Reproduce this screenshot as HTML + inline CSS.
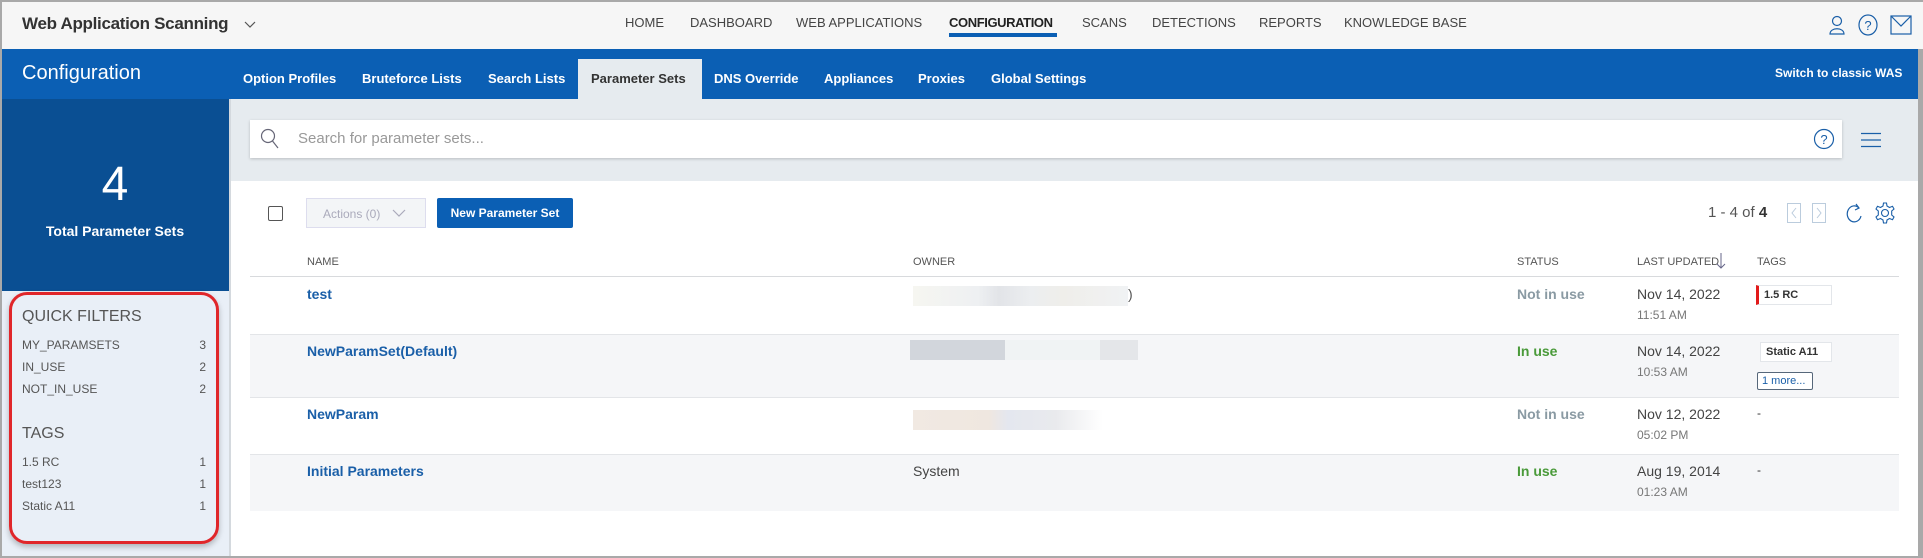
<!DOCTYPE html>
<html><head><meta charset="utf-8"><style>
*{margin:0;padding:0;box-sizing:border-box}
body{width:1923px;height:558px;overflow:hidden;background:#fff;font-family:"Liberation Sans",sans-serif;position:relative;color:#333}
.a{position:absolute;white-space:nowrap}
.nav{font-size:13px;color:#444;top:15px}
.tab{font-size:13px;font-weight:bold;color:#fff;top:71px}
.qf{font-size:12px;color:#555;left:22px}
.cnt{font-size:12px;color:#555;left:196px;width:10px;text-align:right}
.hd{font-size:11px;color:#555;top:256px}
.nm{font-size:14px;font-weight:bold;color:#1a5fa8;left:307px}
.st{font-size:14px;font-weight:bold;left:1517px}
.dt{font-size:14px;color:#444;left:1637px}
.tm{font-size:12px;color:#777;left:1637px}
.blur{position:absolute;height:20px}
</style></head><body>
<div class="a" style="left:0;top:0;width:1923px;height:2px;background:#a9a9a9"></div>
<div class="a" style="left:0;top:2px;width:1923px;height:47px;background:#f6f6f6"></div>
<div class="a" style="left:22px;top:14px;font-size:17px;font-weight:bold;color:#333;letter-spacing:-0.3px">Web Application Scanning</div>
<svg class="a" style="left:244px;top:20px" width="12" height="10"><path d="M1 2 L6 7 L11 2" fill="none" stroke="#555" stroke-width="1.2"/></svg>
<div class="a nav" style="left:625px">HOME</div>
<div class="a nav" style="left:690px">DASHBOARD</div>
<div class="a nav" style="left:796px">WEB APPLICATIONS</div>
<div class="a nav" style="left:949px;font-weight:bold;color:#222;letter-spacing:-0.4px">CONFIGURATION</div>
<div class="a" style="left:949px;top:33px;width:108px;height:4px;background:#0b5fb4"></div>
<div class="a nav" style="left:1082px">SCANS</div>
<div class="a nav" style="left:1152px">DETECTIONS</div>
<div class="a nav" style="left:1259px">REPORTS</div>
<div class="a nav" style="left:1344px">KNOWLEDGE BASE</div>
<svg class="a" style="left:1829px;top:15px" width="16" height="20"><circle cx="8" cy="6" r="4.5" fill="none" stroke="#1a5fa8" stroke-width="1.2"/><path d="M1 19 C1 12 15 12 15 19 Z" fill="none" stroke="#1a5fa8" stroke-width="1.2"/></svg>
<svg class="a" style="left:1858px;top:14px" width="20" height="22"><ellipse cx="10" cy="11" rx="9" ry="10" fill="none" stroke="#1a5fa8" stroke-width="1.2"/><text x="10" y="16" font-size="13" text-anchor="middle" fill="#1a5fa8" font-family="Liberation Sans">?</text></svg>
<svg class="a" style="left:1890px;top:15px" width="22" height="20"><rect x="1" y="1" width="20" height="18" fill="none" stroke="#1a5fa8" stroke-width="1.2"/><path d="M1 1 L11 11 L21 1" fill="none" stroke="#1a5fa8" stroke-width="1.2"/></svg>

<div class="a" style="left:0;top:49px;width:1918px;height:50px;background:#0b5fb4"></div>
<div class="a" style="left:22px;top:62px;font-size:20px;color:#fff">Configuration</div>
<div class="a" style="left:578px;top:59px;width:124px;height:40px;background:#e6ebef"></div>
<div class="a tab" style="left:243px">Option Profiles</div>
<div class="a tab" style="left:362px">Bruteforce Lists</div>
<div class="a tab" style="left:488px">Search Lists</div>
<div class="a tab" style="left:591px;color:#333">Parameter Sets</div>
<div class="a tab" style="left:714px">DNS Override</div>
<div class="a tab" style="left:824px">Appliances</div>
<div class="a tab" style="left:918px">Proxies</div>
<div class="a tab" style="left:991px">Global Settings</div>
<div class="a" style="left:1775px;top:66px;font-size:12px;font-weight:bold;color:#fff">Switch to classic WAS</div>

<div class="a" style="left:0;top:99px;width:230px;height:192px;background:#0a4f93"></div>
<div class="a" style="left:0;top:291px;width:230px;height:265px;background:#e9eff7"></div>
<div class="a" style="left:229px;top:99px;width:2px;height:457px;background:#d4d9de"></div>
<div class="a" style="left:0;top:157px;width:230px;text-align:center;font-size:48px;color:#fff">4</div>
<div class="a" style="left:0;top:223px;width:230px;text-align:center;font-size:14px;font-weight:bold;color:#fff">Total Parameter Sets</div>
<div class="a" style="left:9px;top:292px;width:210px;height:252px;border:3px solid #e0262a;border-radius:18px;box-shadow:0 3px 6px rgba(0,0,0,.25)"></div>
<div class="a" style="left:22px;top:308px;font-size:16px;color:#555;font-family:'Liberation Sans Narrow','Liberation Sans',sans-serif">QUICK FILTERS</div>
<div class="a qf" style="top:338px">MY_PARAMSETS</div><div class="a cnt" style="top:338px">3</div>
<div class="a qf" style="top:360px">IN_USE</div><div class="a cnt" style="top:360px">2</div>
<div class="a qf" style="top:382px">NOT_IN_USE</div><div class="a cnt" style="top:382px">2</div>
<div class="a" style="left:22px;top:425px;font-size:16px;color:#555;font-family:'Liberation Sans Narrow','Liberation Sans',sans-serif">TAGS</div>
<div class="a qf" style="top:455px">1.5 RC</div><div class="a cnt" style="top:455px">1</div>
<div class="a qf" style="top:477px">test123</div><div class="a cnt" style="top:477px">1</div>
<div class="a qf" style="top:499px">Static A11</div><div class="a cnt" style="top:499px">1</div>

<div class="a" style="left:231px;top:99px;width:1687px;height:82px;background:#e6ebef"></div>
<div class="a" style="left:250px;top:120px;width:1592px;height:38px;background:#fff;box-shadow:0 1px 3px rgba(0,0,0,.2)"></div>
<svg class="a" style="left:260px;top:128px" width="20" height="22"><circle cx="8" cy="8" r="6.5" fill="none" stroke="#667" stroke-width="1.2"/><path d="M12.5 13 L18 20" stroke="#667" stroke-width="1.2"/></svg>
<div class="a" style="left:298px;top:130px;font-size:15px;color:#999">Search for parameter sets...</div>
<svg class="a" style="left:1813px;top:128px" width="22" height="22"><circle cx="11" cy="11" r="9.5" fill="none" stroke="#1a5fa8" stroke-width="1.2"/><text x="11" y="16" font-size="13" text-anchor="middle" fill="#1a5fa8" font-family="Liberation Sans">?</text></svg>
<svg class="a" style="left:1860px;top:132px" width="22" height="16"><path d="M1 1.5H21M1 8H21M1 14.5H21" stroke="#1a5fa8" stroke-width="1.2"/></svg>
<div class="a" style="left:1918px;top:49px;width:5px;height:509px;background:#a9a9a9"></div>
<div class="a" style="left:0;top:556px;width:1923px;height:2px;background:#a9a9a9"></div>
<div class="a" style="left:0;top:2px;width:2px;height:556px;background:#a9a9a9"></div>

<div class="a" style="left:268px;top:206px;width:15px;height:15px;border:1px solid #555;border-radius:2px"></div>
<div class="a" style="left:306px;top:198px;width:120px;height:30px;background:#f3f5f7;border:1px solid #dde;font-size:12px;color:#aab;padding:8px 0 0 16px">Actions (0)</div>
<svg class="a" style="left:392px;top:208px" width="14" height="10"><path d="M1 2 L7 8 L13 2" fill="none" stroke="#aab" stroke-width="1.2"/></svg>
<div class="a" style="left:437px;top:198px;width:136px;height:30px;background:#0b5fb4;border-radius:2px;font-size:12px;font-weight:bold;color:#fff;text-align:center;padding-top:8px">New Parameter Set</div>
<div class="a" style="left:1708px;top:204px;font-size:15px;color:#555">1 - 4 of <b style="color:#333">4</b></div>
<div class="a" style="left:1787px;top:203px;width:14px;height:20px;border:1px solid #bcd"></div>
<div class="a" style="left:1812px;top:203px;width:14px;height:20px;border:1px solid #bcd"></div>
<svg class="a" style="left:1789px;top:207px" width="10" height="12"><path d="M7 1 L3 6 L7 11" fill="none" stroke="#bcd"/></svg>
<svg class="a" style="left:1814px;top:207px" width="10" height="12"><path d="M3 1 L7 6 L3 11" fill="none" stroke="#bcd"/></svg>
<svg class="a" style="left:1846px;top:202px" width="18" height="24"><path d="M13 6 A7 8 0 1 0 15 14" fill="none" stroke="#1a5fa8" stroke-width="1.2"/><path d="M10 2 L13 6 L9 8" fill="none" stroke="#1a5fa8" stroke-width="1.2"/></svg>
<svg class="a" style="left:1874px;top:201px" width="22" height="24"><path d="M9.5 2 H12.5 L13 5 L15.5 6.5 L18.5 5.3 L20 8 L17.7 10 V14 L20 16 L18.5 18.7 L15.5 17.5 L13 19 L12.5 22 H9.5 L9 19 L6.5 17.5 L3.5 18.7 L2 16 L4.3 14 V10 L2 8 L3.5 5.3 L6.5 6.5 L9 5 Z" fill="none" stroke="#1a5fa8" stroke-width="1.1"/><circle cx="11" cy="12" r="3.5" fill="none" stroke="#1a5fa8" stroke-width="1.1"/></svg>

<div class="a hd" style="left:307px">NAME</div>
<div class="a hd" style="left:913px">OWNER</div>
<div class="a hd" style="left:1517px">STATUS</div>
<div class="a hd" style="left:1637px">LAST UPDATED</div>
<svg class="a" style="left:1716px;top:252px" width="10" height="18"><path d="M5 1 V16 M1 12 L5 16 L9 12" fill="none" stroke="#668" stroke-width="1"/></svg>
<div class="a hd" style="left:1757px">TAGS</div>
<div class="a" style="left:250px;top:276px;width:1649px;height:1px;background:#d8dadd"></div>

<div class="a" style="left:250px;top:334px;width:1649px;height:63px;background:#f5f6f8;border-top:1px solid #e3e5e8"></div>
<div class="a" style="left:250px;top:397px;width:1649px;height:57px;border-top:1px solid #e3e5e8"></div>
<div class="a" style="left:250px;top:454px;width:1649px;height:57px;background:#f5f6f8;border-top:1px solid #e3e5e8"></div>

<div class="a nm" style="top:286px">test</div>
<div class="a nm" style="top:343px">NewParamSet(Default)</div>
<div class="a nm" style="top:406px">NewParam</div>
<div class="a nm" style="top:463px">Initial Parameters</div>

<div class="blur" style="left:913px;top:286px;width:215px;background:linear-gradient(90deg,#f6f6f1,#eef0f2 30%,#e2e4e8 40%,#eceef0 55%,#efeeea 70%,#f0f2f4)"></div>
<div class="a" style="left:1128px;top:286px;font-size:14px;color:#555">)</div>
<div class="blur" style="left:910px;top:340px;width:95px;background:#d2d6dc"></div>
<div class="blur" style="left:1005px;top:340px;width:95px;background:#f0f3f4"></div>
<div class="blur" style="left:1100px;top:340px;width:38px;background:#e4e6e9"></div>
<div class="blur" style="left:913px;top:410px;width:190px;background:linear-gradient(90deg,#f1e9e2,#efe7e0 40%,#e4e7ef 50%,#e9eaed 75%,#fff)"></div>
<div class="a" style="left:913px;top:463px;font-size:14px;color:#444">System</div>

<div class="a st" style="top:286px;color:#8a9aa3">Not in use</div>
<div class="a st" style="top:343px;color:#4a9a3a">In use</div>
<div class="a st" style="top:406px;color:#8a9aa3">Not in use</div>
<div class="a st" style="top:463px;color:#4a9a3a">In use</div>

<div class="a dt" style="top:286px">Nov 14, 2022</div><div class="a tm" style="top:308px">11:51 AM</div>
<div class="a dt" style="top:343px">Nov 14, 2022</div><div class="a tm" style="top:365px">10:53 AM</div>
<div class="a dt" style="top:406px">Nov 12, 2022</div><div class="a tm" style="top:428px">05:02 PM</div>
<div class="a dt" style="top:463px">Aug 19, 2014</div><div class="a tm" style="top:485px">01:23 AM</div>

<div class="a" style="left:1756px;top:285px;width:76px;height:20px;background:#fff;border:1px solid #e3e6ea;border-left:3px solid #e21a1a;font-size:11px;font-weight:bold;color:#333;padding:3px 0 0 5px">1.5 RC</div>
<div class="a" style="left:1760px;top:342px;width:72px;height:20px;background:#fff;border:1px solid #e3e6ea;font-size:11px;font-weight:bold;color:#333;padding:3px 0 0 5px">Static A11</div>
<div class="a" style="left:1757px;top:372px;width:56px;height:18px;background:#fff;border:1px solid #56677a;border-radius:2px;font-size:11px;color:#1a5fa8;padding:2px 0 0 4px">1 more...</div>
<div class="a" style="left:1757px;top:406px;font-size:12px;color:#333">-</div>
<div class="a" style="left:1757px;top:463px;font-size:12px;color:#333">-</div>
</body></html>
